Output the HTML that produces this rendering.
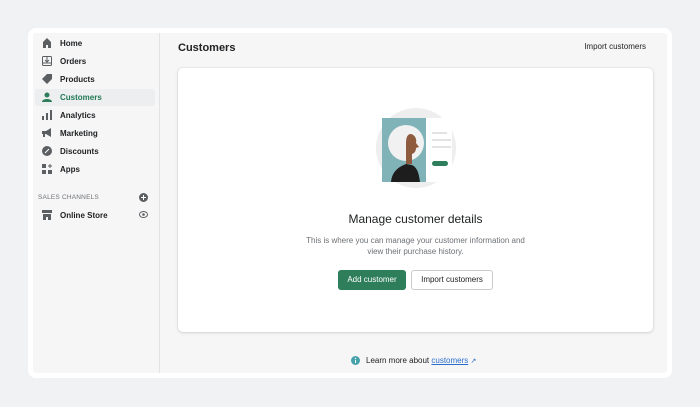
<!DOCTYPE html>
<html><head><style>
*{margin:0;padding:0;box-sizing:border-box}
body{width:700px;height:407px;background:#f1f2f4;font-family:"Liberation Sans",sans-serif;position:relative;overflow:hidden;color:#202223}
.frame{position:absolute;left:28px;top:28px;width:644px;height:350px;background:#fff;border-radius:8px}
.app{position:absolute;left:33px;top:33px;width:634px;height:340px;background:#f6f6f7;border-radius:3px;overflow:hidden}
.side{position:absolute;left:0;top:0;width:127px;height:340px;border-right:1px solid #e1e3e5}
.it{position:absolute;left:2px;width:120px;height:17px;font-size:8px;font-weight:bold;line-height:17px;padding-left:25px;border-radius:3px}
.it svg{position:absolute;left:7px;top:3px}
.sel{background:#edeeef;color:#1f7a55}
.sc{position:absolute;left:5px;top:160px;font-size:6.5px;color:#6d7175;letter-spacing:.2px}
.main{position:absolute;left:128px;top:0;right:0;bottom:0}
h1{position:absolute;left:17px;top:9px;font-size:11px;font-weight:bold}
.imp{position:absolute;right:21px;top:9px;font-size:8px}
.card{position:absolute;left:17px;top:35px;width:475px;height:264px;background:#fff;border-radius:5px;box-shadow:0 0 0 1px rgba(63,63,68,.05),0 1px 3px rgba(63,63,68,.15)}
h2{position:absolute;left:0;right:0;top:144px;text-align:center;font-size:12px;font-weight:normal}
.p{position:absolute;left:0;right:0;top:167px;text-align:center;font-size:8px;color:#6d7175;line-height:11px}
.b1{position:absolute;left:160px;top:202px;width:68px;height:20px;background:#2e7d5b;color:#fff;font-size:8px;line-height:20px;text-align:center;border-radius:3px}
.b2{position:absolute;left:233px;top:202px;width:82px;height:20px;background:#fff;border:1px solid #c9cccf;font-size:8px;line-height:18px;text-align:center;border-radius:3px}
.lm{position:absolute;top:323px;font-size:8px}
.lm a{color:#2c6ecb;text-decoration:underline}
</style></head><body>
<div class="frame"></div>
<div class="app">
<div class="side">
<div class="it" style="top:2px"><svg width="10" height="10"><path d="M1 4L5 0L9 4V10H6V7H4V10H1Z" fill="#5c5f62"/></svg>Home</div>
<div class="it" style="top:20px"><svg width="10" height="10"><rect x="0.5" y="0.5" width="9" height="9" rx="1" fill="none" stroke="#5c5f62"/><path d="M5 1V6M3 4L5 6L7 4M1 7H9" stroke="#5c5f62" fill="none"/></svg>Orders</div>
<div class="it" style="top:38px"><svg width="10" height="10"><path d="M5 0H10V5L5 10L0 5Z" fill="#5c5f62"/></svg>Products</div>
<div class="it sel" style="top:56px"><svg width="10" height="10"><circle cx="5" cy="3" r="2.5" fill="#2e7d5b"/><path d="M0 10C0 6 10 6 10 10Z" fill="#2e7d5b"/></svg>Customers</div>
<div class="it" style="top:74px"><svg width="10" height="10"><rect x="0" y="6" width="2" height="4" fill="#5c5f62"/><rect x="4" y="3" width="2" height="7" fill="#5c5f62"/><rect x="8" y="0" width="2" height="10" fill="#5c5f62"/></svg>Analytics</div>
<div class="it" style="top:92px"><svg width="10" height="10"><path d="M0 3H4L9 0V9L4 6H3V9H1V6H0Z" fill="#5c5f62"/></svg>Marketing</div>
<div class="it" style="top:110px"><svg width="10" height="10"><circle cx="5" cy="5" r="5" fill="#5c5f62"/><path d="M3 7L7 3" stroke="#fff"/></svg>Discounts</div>
<div class="it" style="top:128px"><svg width="10" height="10"><rect width="4" height="4" fill="#5c5f62"/><rect y="6" width="4" height="4" fill="#5c5f62"/><rect x="6" y="6" width="4" height="4" fill="#5c5f62"/><path d="M8 0V4M6 2H10" stroke="#5c5f62"/></svg>Apps</div>
<div class="sc" style="top:161px">SALES CHANNELS</div>
<svg style="position:absolute;left:106px;top:160px" width="9" height="9"><circle cx="4.5" cy="4.5" r="4.5" fill="#5c5f62"/><path d="M4.5 2V7M2 4.5H7" stroke="#fff"/></svg>
<div class="it" style="top:174px"><svg width="10" height="10"><path d="M0 0H10V3H0Z M1 4H9V10H6V7H4V10H1Z" fill="#5c5f62"/></svg>Online Store</div>
<svg style="position:absolute;left:106px;top:178px" width="9" height="7"><ellipse cx="4.5" cy="3.5" rx="4" ry="3" fill="none" stroke="#5c5f62"/><circle cx="4.5" cy="3.5" r="1.3" fill="#5c5f62"/></svg>
</div>
<div class="main">
<h1>Customers</h1>
<div class="imp">Import customers</div>
<div class="card">
<svg style="position:absolute;left:195px;top:40px" width="90" height="90">
<circle cx="43" cy="40" r="40" fill="#eeeeee"/>
<rect x="9" y="10" width="70" height="64" fill="#fff"/>
<rect x="9" y="10" width="44" height="64" fill="#7fb3b8"/>
<circle cx="33" cy="35" r="18" fill="#f1f1f1"/>
<path d="M38 26C42 27 44 31 43 35L46 39L43 40C43 45 39 46 39 46V56H33V36C33 30 34 26 38 26Z" fill="#8e5b3f"/>
<path d="M18 74C19 62 28 58 33 56L39 57C45 60 46 67 47 74Z" fill="#1d1d1d"/>
<rect x="59" y="24" width="15" height="2" fill="#e3e3e3"/>
<rect x="59" y="31" width="19" height="2" fill="#e3e3e3"/>
<rect x="59" y="38" width="19" height="2" fill="#e3e3e3"/>
<rect x="59" y="53" width="16" height="5" rx="2.5" fill="#2e7d5b"/>
</svg>
<h2>Manage customer details</h2>
<div class="p">This is where you can manage your customer information and<br>view their purchase history.</div>
<div class="b1">Add customer</div>
<div class="b2">Import customers</div>
</div>
<svg style="position:absolute;left:190px;top:323px" width="9" height="9"><circle cx="4.5" cy="4.5" r="4.5" fill="#47a1ad"/><path d="M4.5 4V7" stroke="#fff"/><circle cx="4.5" cy="2.5" r=".7" fill="#fff"/></svg>
<div class="lm" style="left:205px">Learn more about <a>customers</a> <span style="color:#2c6ecb;font-size:7px">↗</span></div>
</div>
</div>
</body></html>
